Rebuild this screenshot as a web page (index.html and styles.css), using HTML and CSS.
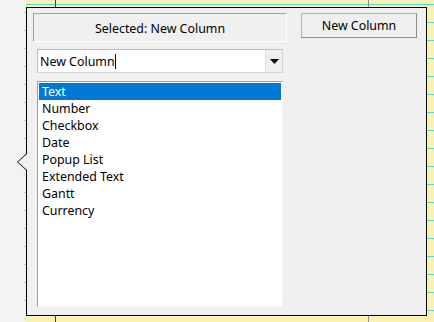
FILE: index.html
```html
<!DOCTYPE html>
<html lang="en">
<head>
    <meta charset="UTF-8">
    <title>Column Type</title>
    <link rel="stylesheet" href="styles.css">
</head>
<body>
    <div class="sheet">
        <div class="popup">
            <div class="left-panel">
                <div class="selected-header">Selected: New Column</div>

                <div class="combo">
                    <span class="combo-text">New Column<span class="caret"></span></span>
                    <span class="combo-button">
                        <svg width="9" height="5" viewBox="0 0 9 5"><path d="M0 0H9L4.5 5Z" fill="#000"/></svg>
                    </span>
                </div>

                <ul class="type-list">
                    <li class="selected">Text</li>
                    <li>Number</li>
                    <li>Checkbox</li>
                    <li>Date</li>
                    <li>Popup List</li>
                    <li>Extended Text</li>
                    <li>Gantt</li>
                    <li>Currency</li>
                </ul>
            </div>

            <button class="column-button">New Column</button>
        </div>
    </div>
</body>
</html>
```

FILE: styles.css
```css
html, body {
    margin: 0;
    height: 100%;
}
body {
    font-family: "Noto Sans", "Open Sans", sans-serif;
    font-size: 12.4px;
    color: #000;
    background:
        repeating-linear-gradient(to bottom, transparent 0 12px, #c8c8c8 12px 13px, transparent 13px 18px) 24px 0 / 2px 100% no-repeat,
        linear-gradient(to right, #f3f3f3 0 26px, transparent 26px),
        linear-gradient(to right, transparent 55px, #8b1c1c 55px 56px, transparent 56px),
        linear-gradient(to right, transparent 368px, #8c8c8c 368px 369px, transparent 369px),
        repeating-linear-gradient(to bottom, transparent 0 4px, #55dccc 4px 5px, transparent 5px 18px),
        #f9f1b4;
}
.sheet {
    padding: 7px 0 0 26px;
}

/* Popup window */
.popup {
    position: relative;
    box-sizing: border-box;
    width: 401px;
    height: 309px;
    border: 1px solid #000;
    background: #f0f0f0;
    padding: 5px 0 0 6px;
    display: flex;
    align-items: flex-start;
}
.popup::before,
.popup::after {
    content: "";
    position: absolute;
    width: 0;
    height: 0;
    border-style: solid;
    border-color: transparent;
}
.popup::before {
    left: -10px;
    top: 145px;
    border-width: 9px 10px 9px 0;
    border-right-color: #000;
}
.popup::after {
    left: -9px;
    top: 146px;
    border-width: 8px 9px 8px 0;
    border-right-color: #f0f0f0;
}

.left-panel {
    width: 254px;
    display: flex;
    flex-direction: column;
}
.selected-header {
    box-sizing: border-box;
    height: 29px;
    border-top: 1px solid #a0a0a0;
    border-left: 1px solid #a0a0a0;
    border-right: 1px solid #fff;
    border-bottom: 1px solid #fff;
    display: flex;
    align-items: center;
    justify-content: center;
    padding-top: 1px;
}

.combo {
    box-sizing: border-box;
    margin: 7px 0 0 4px;
    width: 246px;
    height: 24px;
    background: #fff;
    border: 1px solid #d4d4d4;
    border-top-color: #bdbdbd;
    border-left-color: #bdbdbd;
    display: flex;
    align-items: center;
    justify-content: space-between;
}
.combo-text {
    padding-left: 2px;
    display: flex;
    align-items: center;
}
.caret {
    display: inline-block;
    width: 1px;
    height: 15px;
    background: #000;
}
.combo-button {
    box-sizing: border-box;
    width: 17px;
    height: 22px;
    background: #f0f0f0;
    border-left: 1px solid #dcdcdc;
    display: flex;
    align-items: center;
    justify-content: center;
}

.type-list {
    box-sizing: border-box;
    list-style: none;
    margin: 8px 0 0 4px;
    padding: 1px 1px 0 1px;
    width: 246px;
    height: 226px;
    background: #fff;
    border-top: 1px solid #a0a0a0;
    border-left: 1px solid #a0a0a0;
    border-right: 1px solid #f8f8f8;
    border-bottom: 1px solid #f8f8f8;
}
.type-list li {
    height: 17px;
    line-height: 18px;
    padding-left: 3px;
}
.type-list li.selected {
    background: #0078d7;
    color: #fff;
}

.column-button {
    box-sizing: border-box;
    margin-left: 14px;
    width: 116px;
    height: 25px;
    font-family: inherit;
    font-size: 12.4px;
    color: #000;
    background: #efefef;
    border: 1px solid #b4b4b4;
    border-right-color: #8f8f8f;
    border-bottom-color: #8f8f8f;
    padding: 0;
}
```
